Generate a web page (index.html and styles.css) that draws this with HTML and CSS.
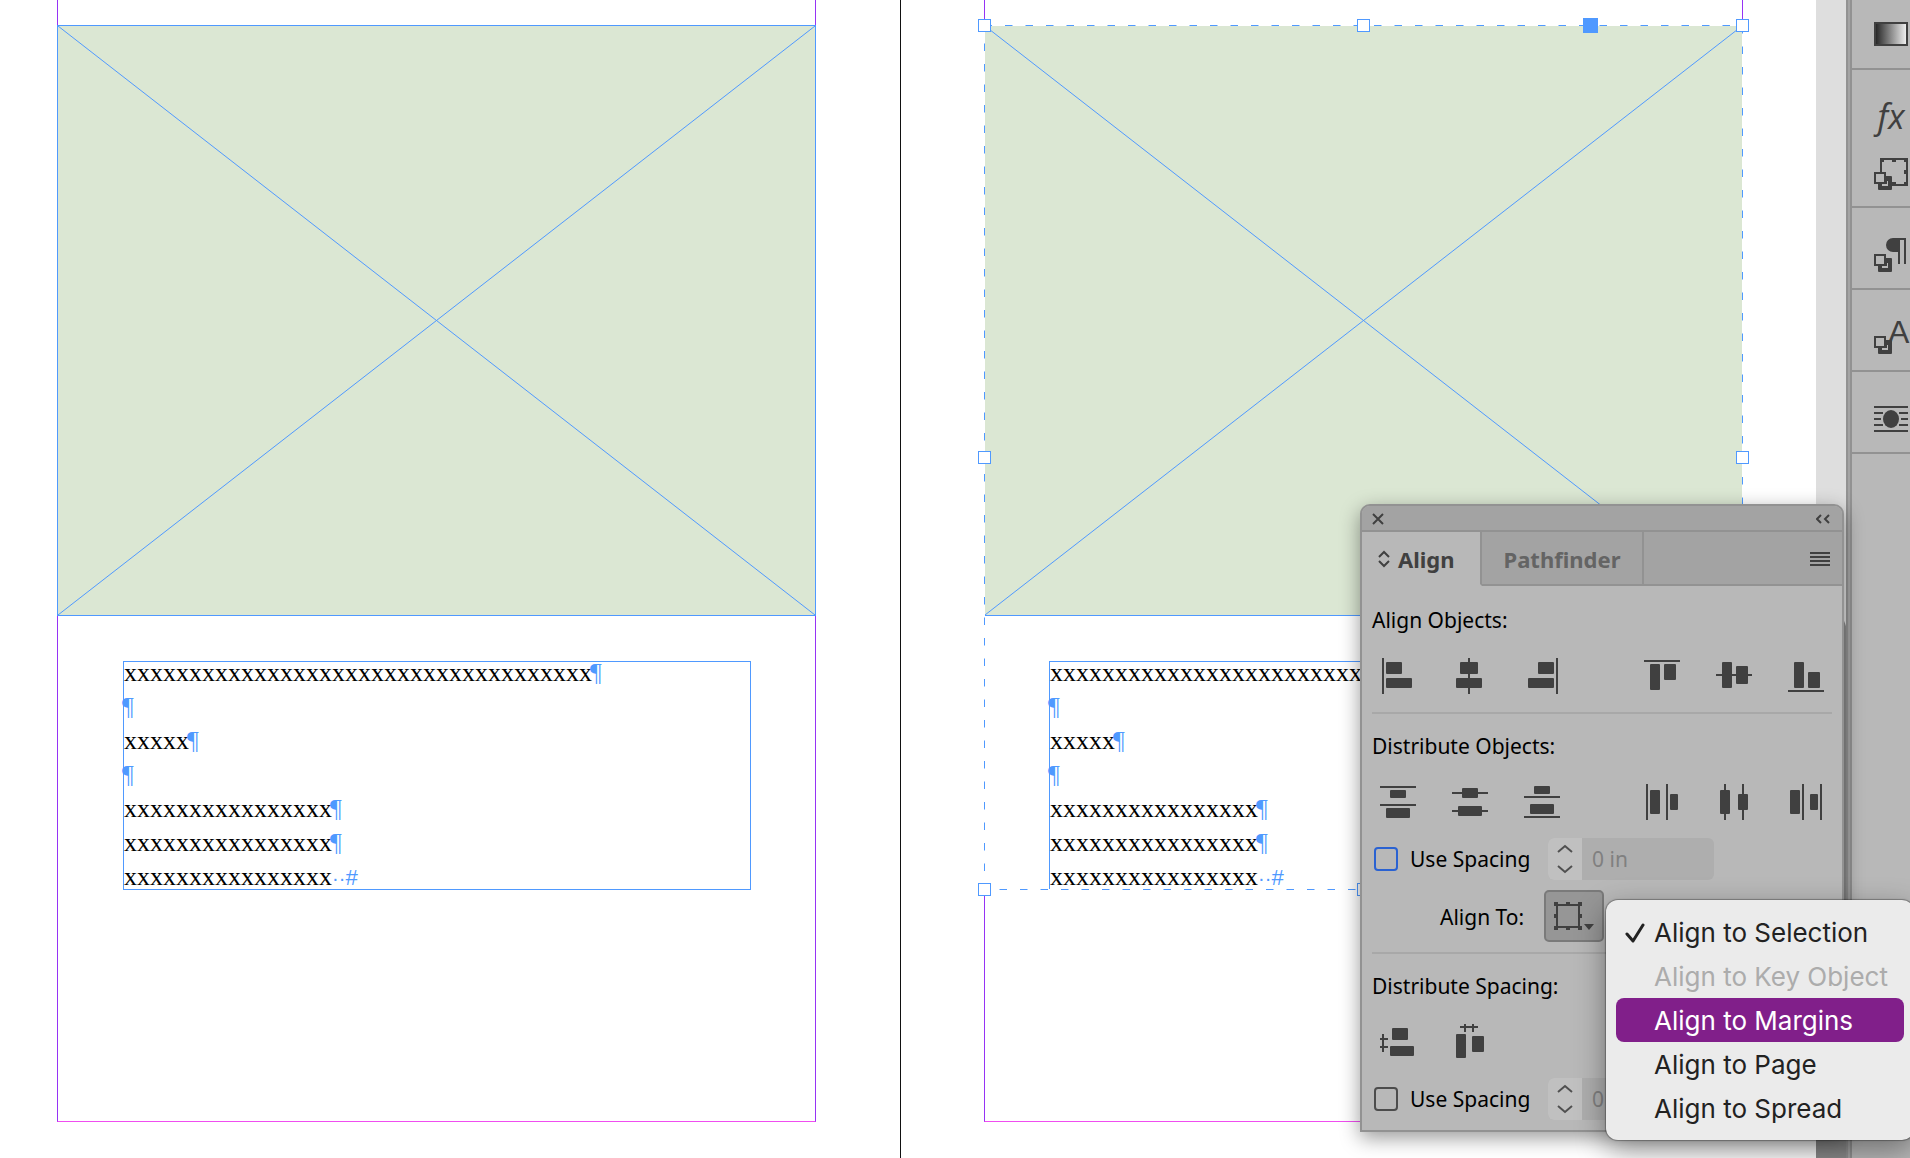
FILE: index.html
```html
<!DOCTYPE html>
<html lang="en">
<head>
<meta charset="utf-8">
<title>Align panel</title>
<link rel="stylesheet" href="styles.css">
</head>
<body>
<svg class="defs" width="0" height="0" aria-hidden="true">
  <symbol id="layers" viewBox="0 0 18 18">
    <rect x="4" y="4" width="14" height="14" rx="1" fill="#404040"/>
    <path d="M13 9H14V14H8V12H13Z" fill="#b8b8b8"/>
    <rect x="1" y="1" width="10" height="10" fill="#b8b8b8" stroke="#404040" stroke-width="2"/>
  </symbol>
</svg>
<div class="app">
  <main class="canvas">
    <section class="page page-left">
      <div class="margins"></div>
      <svg class="picture" viewBox="0 0 758 590" preserveAspectRatio="none" aria-hidden="true"><path d="M0 0L758 590M758 0L0 590"/></svg>
      <div class="text-frame">
        <p>xxxxxxxxxxxxxxxxxxxxxxxxxxxxxxxxxxxx<span class="mark">¶</span></p>
        <p><span class="mark">¶</span></p>
        <p>xxxxx<span class="mark">¶</span></p>
        <p><span class="mark">¶</span></p>
        <p>xxxxxxxxxxxxxxxx<span class="mark">¶</span></p>
        <p>xxxxxxxxxxxxxxxx<span class="mark">¶</span></p>
        <p>xxxxxxxxxxxxxxxx<span class="space-mark">··</span><span class="end-mark">#</span></p>
      </div>
    </section>
    <section class="page page-right">
      <div class="margins"></div>
      <svg class="picture" viewBox="0 0 758 590" preserveAspectRatio="none" aria-hidden="true"><path d="M0 0L758 590M758 0L0 590"/></svg>
      <div class="text-frame text-frame-open">
        <p>xxxxxxxxxxxxxxxxxxxxxxxxxxxxxxxxxxxx<span class="mark">¶</span></p>
        <p><span class="mark">¶</span></p>
        <p>xxxxx<span class="mark">¶</span></p>
        <p><span class="mark">¶</span></p>
        <p>xxxxxxxxxxxxxxxx<span class="mark">¶</span></p>
        <p>xxxxxxxxxxxxxxxx<span class="mark">¶</span></p>
        <p>xxxxxxxxxxxxxxxx<span class="space-mark">··</span><span class="end-mark">#</span></p>
      </div>
      <svg class="selection" viewBox="0 0 774 880" aria-hidden="true">
        <path d="M8.5 8.5H766.5V872.5H8.5Z" fill="none" stroke="#fff"/>
        <path d="M8.5 8.5H766.5V872.5H8.5Z" fill="none" stroke="#4f99ff" stroke-dasharray="7.5 13"/>
        <g fill="#fff" stroke="#4f99ff">
          <rect x="2.5" y="2.5" width="12" height="12"/>
          <rect x="381.5" y="2.5" width="12" height="12"/>
          <rect x="760.5" y="2.5" width="12" height="12"/>
          <rect x="2.5" y="434.5" width="12" height="12"/>
          <rect x="760.5" y="434.5" width="12" height="12"/>
          <rect x="2.5" y="866.5" width="12" height="12"/>
          <rect x="381.5" y="866.5" width="12" height="12"/>
        </g>
        <rect x="607" y="1" width="15" height="15" fill="#4f99ff"/>
      </svg>
    </section>
  </main>
  <div class="scrollbar"><div class="thumb"></div></div>
  <aside class="dock">
    <div class="dock-group dock-first">
      <button type="button" aria-label="Gradient"><svg width="34" height="34"><defs><linearGradient id="ramp"><stop offset="0" stop-color="#222"/><stop offset="1" stop-color="#f4f4f4"/></linearGradient></defs><rect x="1" y="6" width="32" height="22" fill="url(#ramp)" stroke="#404040" stroke-width="2"/></svg></button>
    </div>
    <div class="dock-group dock-pair">
      <button type="button" class="fx" aria-label="Effects">fx</button>
      <button type="button" aria-label="Object styles"><svg width="34" height="34"><path d="M7 1H33V27H7Z" fill="none" stroke="#404040" stroke-width="2"/><path d="M6 0h4v4h-4zM18 0h4v4h-4zM30 0h4v4h-4zM30 12h4v4h-4zM30 24h4v4h-4zM18 24h4v4h-4z" fill="#404040"/><use href="#layers" x="0" y="14" width="18" height="18"/></svg></button>
    </div>
    <div class="dock-group">
      <button type="button" aria-label="Paragraph styles"><svg width="34" height="34"><path d="M32 0V26H30V2H26V26H24V14H19A7 7 0 0 1 19 0Z" fill="#404040"/><use href="#layers" x="0" y="16" width="18" height="18"/></svg></button>
    </div>
    <div class="dock-group">
      <button type="button" aria-label="Character styles"><svg width="36" height="34"><text x="14" y="23" class="glyph-a">A</text><use href="#layers" x="0" y="16" width="18" height="18"/></svg></button>
    </div>
    <div class="dock-group">
      <button type="button" aria-label="Text wrap"><svg width="34" height="34"><path d="M0 4h34v2H0zM0 28h34v2H0zM0 10h9v2H0zM25 10h9v2h-9zM0 16h7v2H0zM27 16h7v2h-7zM0 22h9v2H0zM25 22h9v2h-9z" fill="#404040"/><ellipse cx="17" cy="17" rx="8" ry="9" fill="#404040"/></svg></button>
    </div>
  </aside>

  <section class="panel">
    <header class="title-bar">
      <button type="button" aria-label="Close"><svg width="12" height="12"><path d="M1 1L11 11M11 1L1 11" stroke="#404040" stroke-width="2" fill="none"/></svg></button>
      <button type="button" aria-label="Collapse"><svg width="14" height="10"><path d="M5 1L1 5L5 9M13 1L9 5L13 9" stroke="#404040" stroke-width="2" fill="none"/></svg></button>
    </header>
    <div class="tabs">
      <button type="button" class="tab tab-active"><svg width="12" height="18" aria-hidden="true"><path d="M1 7L6 2L11 7M1 11L6 16L11 11" stroke="#404040" stroke-width="2" fill="none"/></svg>Align</button>
      <button type="button" class="tab">Pathfinder</button>
      <div class="tab-rest"><button type="button" aria-label="Panel menu"><svg width="20" height="14"><path d="M0 0h20v2H0zM0 4h20v2H0zM0 8h20v2H0zM0 12h20v2H0z" fill="#404040"/></svg></button></div>
    </div>
    <div class="panel-body">
      <h2>Align Objects:</h2>
      <div class="tools">
        <div class="tool-group">
          <button type="button" aria-label="Align left edges"><svg width="36" height="36"><path d="M2 0h2v36h-2z"/><rect x="6" y="4" width="16" height="12" rx="1"/><rect x="6" y="20" width="26" height="10" rx="1"/></svg></button>
          <button type="button" aria-label="Align horizontal centers"><svg width="36" height="36"><path d="M16 0h2v36h-2z"/><rect x="8" y="4" width="18" height="12" rx="1"/><rect x="4" y="20" width="26" height="10" rx="1"/></svg></button>
          <button type="button" aria-label="Align right edges"><svg width="36" height="36"><path d="M32 0h2v36h-2z"/><rect x="14" y="4" width="16" height="12" rx="1"/><rect x="4" y="20" width="26" height="10" rx="1"/></svg></button>
        </div>
        <div class="tool-group">
          <button type="button" aria-label="Align top edges"><svg width="36" height="36"><path d="M0 2h36v2H0z"/><rect x="6" y="6" width="10" height="26" rx="1"/><rect x="20" y="6" width="12" height="16" rx="1"/></svg></button>
          <button type="button" aria-label="Align vertical centers"><svg width="36" height="36"><path d="M0 16h36v2H0z"/><rect x="6" y="4" width="10" height="26" rx="1"/><rect x="20" y="8" width="12" height="18" rx="1"/></svg></button>
          <button type="button" aria-label="Align bottom edges"><svg width="36" height="36"><path d="M0 32h36v2H0z"/><rect x="6" y="4" width="10" height="26" rx="1"/><rect x="20" y="14" width="12" height="16" rx="1"/></svg></button>
        </div>
      </div>
      <hr>
      <h2>Distribute Objects:</h2>
      <div class="tools">
        <div class="tool-group">
          <button type="button" aria-label="Distribute top edges"><svg width="36" height="36"><path d="M0 2h36v2H0zM0 20h36v2H0z"/><rect x="10" y="6" width="16" height="8" rx="1"/><rect x="6" y="24" width="24" height="10" rx="1"/></svg></button>
          <button type="button" aria-label="Distribute vertical centers"><svg width="36" height="36"><path d="M0 8h36v2H0zM0 26h36v2H0z"/><rect x="10" y="4" width="16" height="10" rx="1"/><rect x="6" y="22" width="24" height="10" rx="1"/></svg></button>
          <button type="button" aria-label="Distribute bottom edges"><svg width="36" height="36"><path d="M0 12h36v2H0zM0 32h36v2H0z"/><rect x="10" y="2" width="16" height="8" rx="1"/><rect x="6" y="20" width="24" height="10" rx="1"/></svg></button>
        </div>
        <div class="tool-group">
          <button type="button" aria-label="Distribute left edges"><svg width="36" height="36"><path d="M2 0h2v36h-2zM22 0h2v36h-2z"/><rect x="6" y="6" width="10" height="24" rx="1"/><rect x="26" y="10" width="8" height="16" rx="1"/></svg></button>
          <button type="button" aria-label="Distribute horizontal centers"><svg width="36" height="36"><path d="M8 0h2v36h-2zM26 0h2v36h-2z"/><rect x="4" y="6" width="10" height="24" rx="1"/><rect x="22" y="10" width="10" height="16" rx="1"/></svg></button>
          <button type="button" aria-label="Distribute right edges"><svg width="36" height="36"><path d="M14 0h2v36h-2zM32 0h2v36h-2z"/><rect x="2" y="6" width="10" height="24" rx="1"/><rect x="22" y="10" width="8" height="16" rx="1"/></svg></button>
        </div>
      </div>
      <div class="spacing-row">
        <input type="checkbox" id="use-spacing-1" class="focused">
        <label for="use-spacing-1">Use Spacing</label>
        <div class="stepper">
          <div class="arrows"><svg width="16" height="30" aria-hidden="true"><path d="M1 8L8 2L15 8M1 22L8 28L15 22"/></svg></div>
          <input type="text" value="0 in" aria-label="Object spacing" disabled>
        </div>
      </div>
      <div class="align-to">
        <span>Align To:</span>
        <button type="button" aria-label="Align to"><svg width="40" height="28"><rect x="3" y="3" width="22" height="22" fill="none" stroke="#404040" stroke-width="2"/><path d="M0 0h4v4h-4zM12 0h4v4h-4zM24 0h4v4h-4zM0 12h4v4h-4zM24 12h4v4h-4zM0 24h4v4h-4zM12 24h4v4h-4zM24 24h4v4h-4zM30 22h10l-5 6z" fill="#404040"/></svg></button>
      </div>
      <hr>
      <h2>Distribute Spacing:</h2>
      <div class="tools">
        <div class="tool-group">
          <button type="button" aria-label="Distribute vertical space"><svg width="36" height="36"><path d="M2 10h2v18h-2zM0 14h8v2H0zM0 22h8v2H0z"/><rect x="12" y="4" width="16" height="12" rx="1"/><rect x="10" y="22" width="24" height="10" rx="1"/></svg></button>
          <button type="button" aria-label="Distribute horizontal space"><svg width="36" height="36"><path d="M8 2h18v2H8zM12 0h2v8h-2zM20 0h2v8h-2z"/><rect x="4" y="10" width="10" height="24" rx="1"/><rect x="20" y="12" width="12" height="16" rx="1"/></svg></button>
        </div>
      </div>
      <div class="spacing-row">
        <input type="checkbox" id="use-spacing-2">
        <label for="use-spacing-2">Use Spacing</label>
        <div class="stepper">
          <div class="arrows"><svg width="16" height="30" aria-hidden="true"><path d="M1 8L8 2L15 8M1 22L8 28L15 22"/></svg></div>
          <input type="text" value="0 in" aria-label="Gap spacing" disabled>
        </div>
      </div>
    </div>
  </section>

  <div class="menu" role="menu">
    <button type="button" role="menuitem"><svg width="20" height="20" aria-hidden="true"><path d="M2 11L8 18L18 2" fill="none" stroke="#222" stroke-width="3" stroke-linecap="round" stroke-linejoin="round"/></svg>Align to Selection</button>
    <button type="button" role="menuitem" disabled>Align to Key Object</button>
    <button type="button" role="menuitem" class="highlighted">Align to Margins</button>
    <button type="button" role="menuitem">Align to Page</button>
    <button type="button" role="menuitem">Align to Spread</button>
  </div>
</div>
</body>
</html>
```
FILE: styles.css
```css
* {
  box-sizing: border-box;
}

body {
  margin: 0;
  background: #fff;
  color: #000;
  font: 21px/28px "Noto Sans", "Open Sans", sans-serif;
}

button {
  margin: 0;
  padding: 0;
  border: 0;
  background: none;
  color: inherit;
  font: inherit;
}

svg {
  display: block;
}

.defs {
  position: absolute;
}

.app {
  position: relative;
  display: flex;
  min-height: 100vh;
  overflow: hidden;
}

/* Document spread */

.canvas {
  position: relative;
  flex: 1;
  overflow: hidden;
}

.page {
  position: absolute;
  top: 0;
  bottom: 0;
}

.page-left {
  left: 0;
  width: 901px;
  border-right: 1px solid #111;
}

.page-right {
  left: 927px;
  width: 889px;
}

.margins {
  position: absolute;
  left: 57px;
  top: -2px;
  width: 759px;
  height: 1124px;
  border: 1px solid #9633f5;
  border-bottom-color: #f04df0;
}

.picture {
  position: absolute;
  left: 57px;
  top: 25px;
  width: 759px;
  height: 591px;
  background: #dbe7d3;
  border: 1px solid #4f99ff;
}

.picture path {
  fill: none;
  stroke: #4f99ff;
}

.page-right .picture {
  border-color: #dbe7d3;
  border-bottom-color: #4f99ff;
}

.text-frame {
  position: absolute;
  left: 123px;
  top: 661px;
  width: 628px;
  height: 229px;
  border: 1px solid #4f99ff;
  font: 26px/34px "Liberation Serif", serif;
}

.text-frame-open {
  left: 122px;
  border-bottom: 0;
}

.text-frame p {
  height: 34px;
  margin: 0;
  white-space: nowrap;
}

.text-frame p:first-child {
  margin-top: -6px;
}

.mark,
.space-mark,
.end-mark {
  color: #4f99ff;
}

.mark {
  margin-left: -2px;
}

.space-mark {
  font: 20px/20px "Liberation Sans", sans-serif;
}

.end-mark {
  font: italic 22px/22px "Liberation Sans", sans-serif;
}

.selection {
  position: absolute;
  left: 49px;
  top: 17px;
  width: 774px;
  height: 880px;
}

/* Scrollbar and dock */

.scrollbar {
  flex: none;
  width: 30px;
  padding-top: 616px;
  background: #dedede;
  display: flex;
}

.thumb {
  flex: 1;
  border-radius: 12px 12px 0 0;
  background: #8b8b8b;
}

.dock {
  flex: none;
  width: 64px;
  border-left: 2px solid #929292;
  background: #b8b8b8;
  box-shadow: inset 2px 0 #a4a4a4, inset 4px 0 #929292;
}

.dock-group {
  display: flex;
  flex-direction: column;
  gap: 22px;
  height: 82px;
  margin-left: 4px;
  padding: 30px 0 0 22px;
  border-bottom: 2px solid #929292;
}

.dock-first {
  height: 70px;
  padding-top: 17px;
}

.dock-pair {
  height: 138px;
  padding-top: 32px;
}

.dock button {
  width: 34px;
  height: 34px;
}

.dock .fx {
  padding-bottom: 6px;
  color: #404040;
  font: italic 34px/28px "Open Sans", sans-serif;
}

.glyph-a {
  fill: #404040;
  font: 32px "Liberation Sans", sans-serif;
}

/* Align panel */

.panel {
  position: absolute;
  top: 504px;
  right: 66px;
  width: 484px;
  border: 2px solid #929292;
  border-radius: 10px 10px 0 0;
  background: #b8b8b8;
  box-shadow: 0 6px 20px rgba(0, 0, 0, 0.4);
}

.title-bar {
  display: flex;
  align-items: center;
  justify-content: space-between;
  height: 26px;
  padding: 2px 12px 0 10px;
  border-bottom: 2px solid #929292;
  border-radius: 8px 8px 0 0;
  background: #a3a3a3;
}

.tabs {
  display: flex;
  height: 54px;
}

.tab,
.tab-rest {
  border-bottom: 2px solid #929292;
  border-right: 2px solid #929292;
  background: #a3a3a3;
}

.tab {
  display: flex;
  align-items: center;
  justify-content: center;
  gap: 8px;
  width: 162px;
  padding-top: 2px;
  color: #646464;
  font-size: 22px;
  font-weight: bold;
}

.tab-active {
  justify-content: flex-start;
  width: 120px;
  padding-left: 16px;
  border-bottom-color: #b8b8b8;
  background: #b8b8b8;
  color: #404040;
}

.tab-rest {
  display: flex;
  flex: 1;
  align-items: center;
  justify-content: flex-end;
  padding-top: 2px;
  padding-right: 12px;
  border-right: 0;
}

.panel-body {
  padding: 20px 10px 10px;
}

.panel-body h2 {
  margin: 0;
  font-size: 21px;
  font-weight: normal;
  line-height: 28px;
}

.panel-body hr {
  height: 2px;
  margin: 18px 0;
  border: 0;
  background: #a8a8a8;
}

.panel-body h2 + .tools {
  margin-top: 24px;
}

.tools {
  display: flex;
  justify-content: space-between;
  padding: 0 8px;
}

.tools svg {
  fill: #404040;
}

.tool-group {
  display: flex;
  gap: 36px;
}

.spacing-row {
  display: flex;
  align-items: center;
  height: 42px;
  margin-top: 18px;
}

.spacing-row input[type="checkbox"] {
  appearance: none;
  width: 24px;
  height: 24px;
  margin: 0 12px 0 2px;
  border: 2px solid #4c4c4c;
  border-radius: 4px;
}

.spacing-row input.focused {
  border-color: #2a62d2;
}

.spacing-row label {
  width: 138px;
}

.stepper {
  display: flex;
  width: 166px;
  height: 42px;
  border-radius: 6px;
  background: #aeaeae;
  overflow: hidden;
}

.arrows {
  display: flex;
  align-items: center;
  justify-content: center;
  width: 34px;
  background: #c0c0c0;
}

.arrows path {
  fill: none;
  stroke: #505050;
  stroke-width: 2;
}

.stepper input {
  flex: 1;
  min-width: 0;
  padding: 0 10px;
  border: 0;
  background: none;
  color: #808080;
  font: inherit;
}

.align-to {
  display: flex;
  align-items: center;
  gap: 16px;
  height: 52px;
  margin: 10px 0 -8px;
  padding-left: 68px;
}

.align-to span {
  width: 88px;
  padding-top: 2px;
}

.align-to button {
  display: flex;
  align-items: center;
  justify-content: center;
  width: 60px;
  height: 52px;
  border: 2px solid #7a7a7a;
  border-radius: 5px;
  background: #969696;
}

/* Align-to menu */

.menu {
  position: absolute;
  top: 900px;
  right: -4px;
  width: 308px;
  padding: 10px;
  border-radius: 12px;
  background: #ebebeb;
  box-shadow: 0 0 1px 1px rgba(0, 0, 0, 0.3), 0 10px 30px rgba(0, 0, 0, 0.4);
}

.menu button {
  position: relative;
  display: block;
  width: 100%;
  height: 44px;
  padding: 2px 0 0 38px;
  border-radius: 8px;
  color: #222;
  font: 26px/42px Inter, sans-serif;
  text-align: left;
}

.menu button:disabled {
  color: #acacac;
}

.menu .highlighted {
  background: #811f8a;
  color: #fff;
}

.menu svg {
  position: absolute;
  left: 9px;
  top: 13px;
}
```
